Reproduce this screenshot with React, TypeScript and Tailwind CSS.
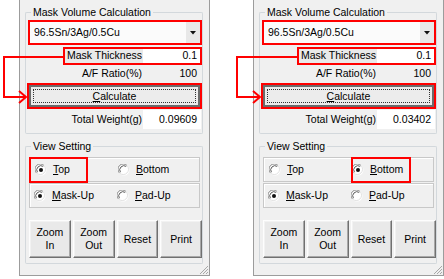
import React from "react";

function Radio({ checked }: { checked: boolean }) {
  return (
    <svg width="12" height="12" viewBox="0 0 12 12" className="shrink-0">
      <circle cx="6" cy="6" r="5.5" fill="#ffffff" />
      <path d="M1.5 9 A5.2 5.2 0 0 1 9 1.5" fill="none" stroke="#8a8a8a" strokeWidth="1" />
      <path d="M2.4 8.2 A4.2 4.2 0 0 1 8.2 2.4" fill="none" stroke="#5a5a5a" strokeWidth="1" />
      <path d="M9 1.5 A5.2 5.2 0 0 1 1.5 9" fill="none" stroke="#e2e2e2" strokeWidth="1" />
      {checked && <circle cx="6" cy="6" r="2" fill="#111111" />}
    </svg>
  );
}

function GroupHeader({ label }: { label: string }) {
  return (
    <div className="flex h-[13px] shrink-0">
      <div className="w-[6px] mt-[6px] h-[7px] border-l border-t border-[#d3d8dc] rounded-tl-[2px]" />
      <div className="px-[2px] leading-[13px] text-black whitespace-nowrap">{label}</div>
      <div className="flex-1 mt-[6px] h-[7px] border-r border-t border-[#d3d8dc] rounded-tr-[2px]" />
    </div>
  );
}

function WinButton({ children }: { children: React.ReactNode }) {
  return (
    <div className="h-[38px] flex flex-col items-center justify-center bg-[#e9e9e9] border border-t-[#fdfdfd] border-l-[#fdfdfd] border-r-[#707070] border-b-[#707070] shadow-[inset_-1px_-1px_0_#a8a8a8,inset_1px_1px_0_#f2f2f2] leading-[13px] text-black text-center">
      {children}
    </div>
  );
}

function Panel({ weight, sel }: { weight: string; sel: "top" | "bottom" }) {
  return (
    <div className="w-[191px] h-[276px] shrink-0 bg-[#f0f0f0] border-x border-b border-[#9c9c9c] pl-[5px] pr-[6px] pt-[6px] flex flex-col">
      {/* Mask Volume Calculation group */}
      <GroupHeader label="Mask Volume Calculation" />
      <div className="border-x border-b border-[#d3d8dc] rounded-b-[2px] flex flex-col pb-[4px]">
        <div className="mt-[1px] ml-[2px] h-[25px] border-2 border-[#ff0000] flex items-stretch bg-[#fbfbfb]">
          <div className="flex-1 flex items-center pl-[4px] text-black">96.5Sn/3Ag/0.5Cu</div>
          <div className="w-[14px] bg-[#e8e8e8] flex items-center justify-center">
            <svg width="6" height="4" viewBox="0 0 6 4">
              <path d="M0 0 H6 L3 3.5 Z" fill="#111" />
            </svg>
          </div>
        </div>
        <div className="mt-[2px] ml-[37px] h-[18px] border-2 border-[#ff0000] flex">
          <div className="w-[78px] bg-[#e9e9e9] flex items-center justify-end pr-[1px] text-black">Mask Thickness</div>
          <div className="flex-1 bg-white flex items-center justify-end pr-[3px] text-black">0.1</div>
        </div>
        <div className="h-[18px] flex pl-[39px]">
          <div className="w-[78px] flex items-center justify-end pr-[1px] text-black">A/F Ratio(%)</div>
          <div className="w-[58px] flex items-center justify-end pr-[4px] text-black">100</div>
        </div>
        <div className="ml-[1px] w-[175px] h-[26px] border-2 border-[#ff0000] flex">
          <div className="flex-1 border-2 border-[#6b6b6b] bg-[#ececec] p-[2px] flex">
            <div className="flex-1 border border-dotted border-[#333] flex items-center justify-center text-black leading-[12px]">
              <span><span className="underline">C</span>alculate</span>
            </div>
          </div>
        </div>
        <div className="mt-[1px] h-[19px] flex pl-[39px]">
          <div className="w-[78px] flex items-center justify-end pr-[1px] text-black">Total Weight(g)</div>
          <div className="w-[58px] bg-white flex items-center justify-end pr-[4px] text-black">{weight}</div>
        </div>
      </div>

      {/* View Setting group */}
      <div className="mt-[6px]">
        <GroupHeader label="View Setting" />
      </div>
      <div className="border-x border-b border-[#d3d8dc] rounded-b-[2px] flex flex-col pb-[5px]">
        <div className="relative mt-[4px] ml-[3px] mr-[2px] h-[25px] border border-[#c8c8c8] shadow-[inset_1px_1px_0_#ffffff] flex items-center pl-[5px]">
          <div className="w-[83px] flex items-center gap-[6px] text-black">
            <Radio checked={sel === "top"} />
            <span><span className="underline">T</span>op</span>
          </div>
          <div className="flex items-center gap-[6px] text-black">
            <Radio checked={sel === "bottom"} />
            <span><span className="underline">B</span>ottom</span>
          </div>
          {sel === "top" ? (
            <div className="absolute left-[-1px] top-[-1px] w-[59px] h-[26px] border-2 border-[#ff0000]" />
          ) : (
            <div className="absolute left-[87px] top-[-1px] w-[60px] h-[26px] border-2 border-[#ff0000]" />
          )}
        </div>
        <div className="mt-[1px] ml-[3px] mr-[2px] h-[25px] border border-[#c8c8c8] shadow-[inset_1px_1px_0_#ffffff] flex items-center pl-[4px]">
          <div className="w-[83px] flex items-center gap-[6px] text-black">
            <Radio checked={true} />
            <span><span className="underline">M</span>ask-Up</span>
          </div>
          <div className="flex items-center gap-[6px] text-black">
            <Radio checked={false} />
            <span><span className="underline">P</span>ad-Up</span>
          </div>
        </div>
        <div className="mt-[12px] ml-[3px] grid grid-cols-4 gap-[2px]">
          <WinButton>
            <span>Zoom</span>
            <span>In</span>
          </WinButton>
          <WinButton>
            <span>Zoom</span>
            <span>Out</span>
          </WinButton>
          <WinButton>Reset</WinButton>
          <WinButton>Print</WinButton>
        </div>
      </div>
      <div className="flex justify-end -mr-[6px] mt-[1px]">
        <svg width="10" height="10" viewBox="0 0 10 10">
          <path d="M9 1 L1 9 M9 4 L4 9 M9 7 L7 9" stroke="#a8a8a8" strokeWidth="1" />
        </svg>
      </div>
    </div>
  );
}

export default function App() {
  return (
    <div className="relative w-[444px] h-[279px] bg-white overflow-hidden flex items-start font-['Tahoma','Liberation_Sans',sans-serif] text-[10.5px]">
      <div className="ml-[19px] flex gap-[43px]">
        <Panel weight="0.09609" sel="top" />
        <Panel weight="0.03402" sel="bottom" />
      </div>
      <svg className="absolute left-0 top-0 pointer-events-none" width="444" height="279" viewBox="0 0 444 279">
        <g stroke="#ff0000" strokeWidth="2" fill="none">
          <path d="M64 57 H4 V97 H26" />
          <path d="M19 91 L26 97 L19 103" />
          <path d="M298 57 H237 V97 H260" />
          <path d="M253 91 L260 97 L253 103" />
        </g>
      </svg>
    </div>
  );
}
